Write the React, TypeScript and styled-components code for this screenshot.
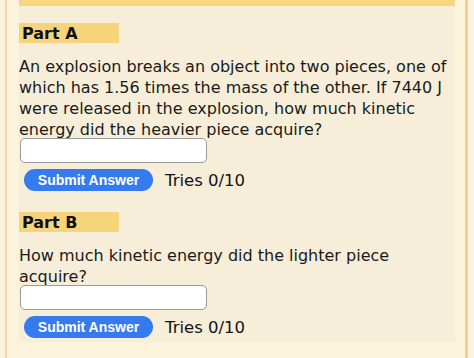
import React from "react";
import styled, { createGlobalStyle } from "styled-components";

const Global = createGlobalStyle`
  html, body { margin: 0; padding: 0; background: #fbf4dd; }
  body { font-family: "DejaVu Sans", Verdana, sans-serif; color: #141414; }
`;

const Frame = styled.div`
  margin-left: 5px;
  width: 463px;
  box-sizing: border-box;
  min-height: 358px;
  border-left: 2px solid #f3d7a0;
  border-right: 3px solid #f0d188;
  padding: 0 10px 0 12px;
  background: #fbf3dc;
`;

const TopBar = styled.div`
  height: 6px;
  background: #f8d67f;
`;

const Panel = styled.div`
  background: #f6eed9;
  padding-bottom: 4px;
`;

const Section = styled.section<{ $top: number }>`
  padding-top: ${(p) => p.$top}px;
`;

const Label = styled.div`
  width: 100px;
  height: 20px;
  box-sizing: border-box;
  background: #f6d47c;
  padding-left: 3px;
  font-weight: bold;
  font-size: 16px;
  line-height: 21px;
  color: #111;
`;

const Question = styled.p`
  margin: 13px -2px 0 0;
  font-size: 16px;
  line-height: 21px;
  color: #1a1a1a;
`;

const Input = styled.input`
  display: block;
  margin: -2px 0 0 1px;
  width: 187px;
  height: 25px;
  box-sizing: border-box;
  border: 1px solid #9a9a9a;
  border-radius: 5px;
  background: #fff;
`;

const Row = styled.div`
  display: flex;
  align-items: center;
  gap: 12px;
  margin-top: 6px;
  padding-left: 5px;
`;

const Button = styled.button`
  width: 129px;
  height: 22px;
  border: none;
  border-radius: 11px;
  background: #367af0;
  color: #fff;
  font-family: "Liberation Sans", Arial, sans-serif;
  font-weight: bold;
  font-size: 14px;
  padding: 0;
`;

const Tries = styled.span`
  font-size: 16.5px;
  color: #141414;
`;

function Part({ label, text, top }: { label: string; text: string; top: number }) {
  return (
    <Section $top={top}>
      <Label>{label}</Label>
      <Question>{text}</Question>
      <Input type="text" />
      <Row>
        <Button>Submit Answer</Button>
        <Tries>Tries 0/10</Tries>
      </Row>
    </Section>
  );
}

export default function App() {
  return (
    <>
      <Global />
      <Frame>
        <TopBar />
        <Panel>
          <Part
            top={17}
            label="Part A"
            text="An explosion breaks an object into two pieces, one of which has 1.56 times the mass of the other. If 7440 J were released in the explosion, how much kinetic energy did the heavier piece acquire?"
          />
          <Part
            top={21}
            label="Part B"
            text="How much kinetic energy did the lighter piece acquire?"
          />
        </Panel>
      </Frame>
    </>
  );
}
